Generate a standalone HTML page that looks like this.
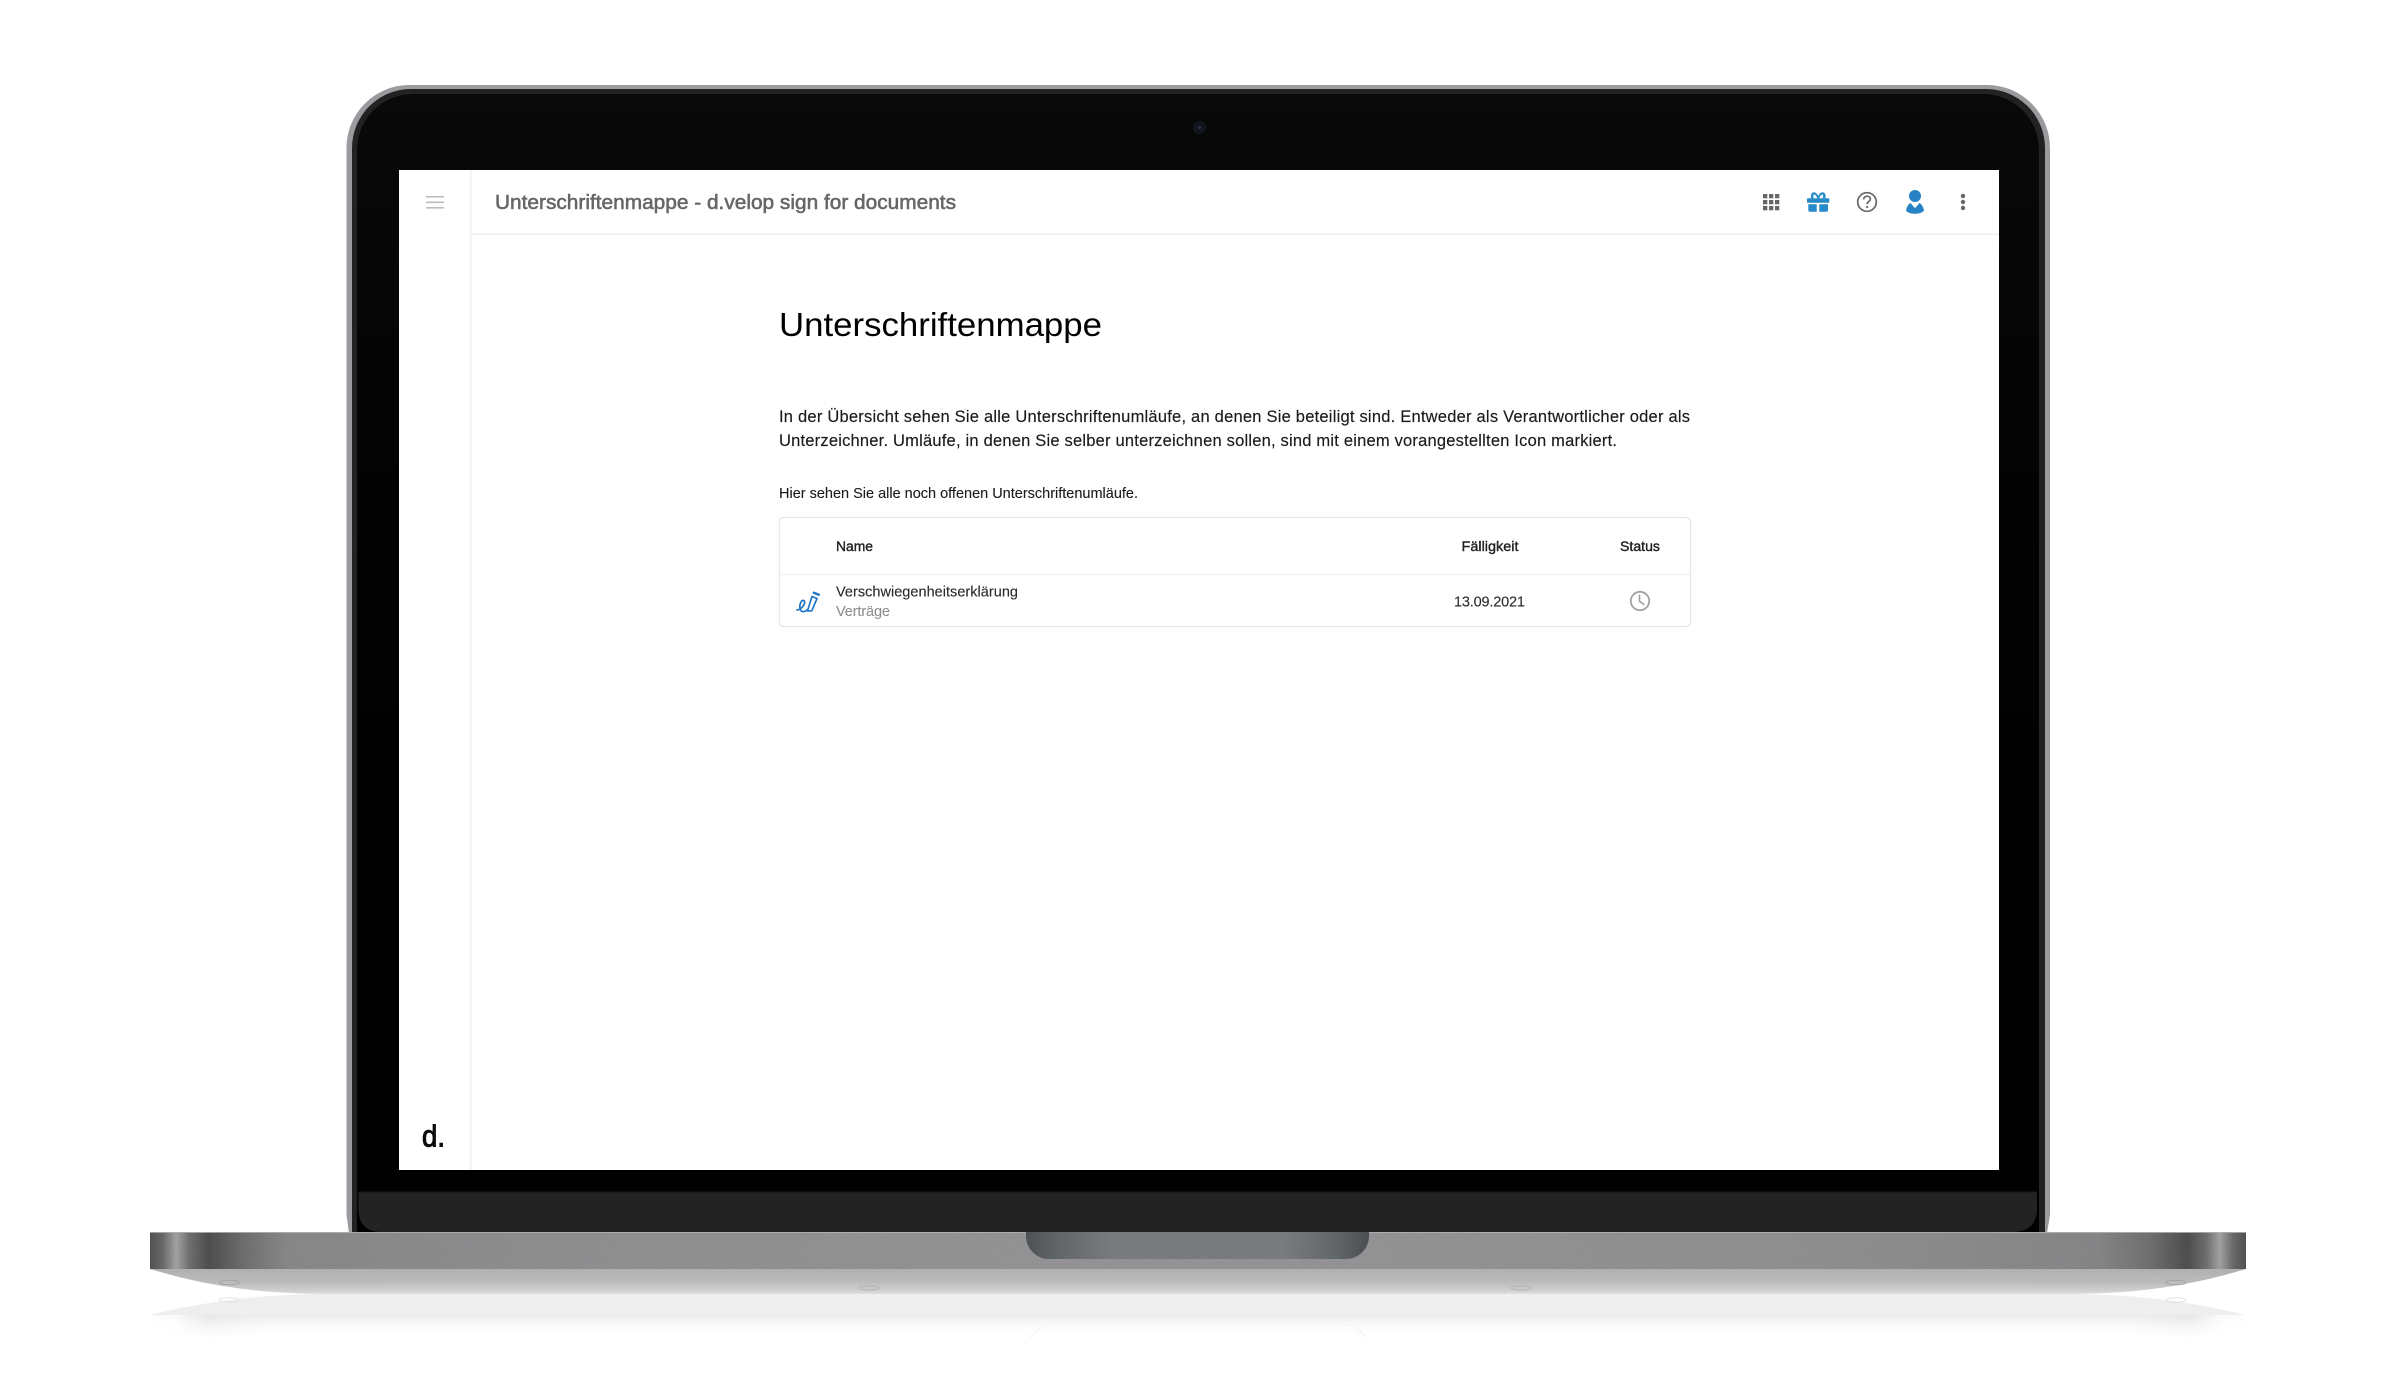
<!DOCTYPE html>
<html lang="de">
<head>
<meta charset="utf-8">
<title>Unterschriftenmappe</title>
<style>
html,body{margin:0;padding:0;background:#fff;width:2395px;height:1377px;overflow:hidden}
svg{display:block}
text{font-family:"Liberation Sans",sans-serif}
</style>
</head>
<body>
<svg width="2395" height="1377" viewBox="0 0 2395 1377" xmlns="http://www.w3.org/2000/svg">
<defs>
  <linearGradient id="baseH" x1="150" x2="2246" y1="0" y2="0" gradientUnits="userSpaceOnUse">
    <stop offset="0" stop-color="#4c4c4e"/>
    <stop offset=".006" stop-color="#646466"/>
    <stop offset=".0125" stop-color="#a0a0a2"/>
    <stop offset=".019" stop-color="#6a6a6c"/>
    <stop offset=".028" stop-color="#48484a"/>
    <stop offset=".045" stop-color="#6a6a6c"/>
    <stop offset=".065" stop-color="#848486"/>
    <stop offset=".2" stop-color="#8c8c8e"/>
    <stop offset=".5" stop-color="#929294"/>
    <stop offset=".8" stop-color="#8c8c8e"/>
    <stop offset=".93" stop-color="#828284"/>
    <stop offset=".955" stop-color="#6a6a6c"/>
    <stop offset=".972" stop-color="#48484a"/>
    <stop offset=".981" stop-color="#6a6a6c"/>
    <stop offset=".9875" stop-color="#a0a0a2"/>
    <stop offset=".994" stop-color="#646466"/>
    <stop offset="1" stop-color="#4c4c4e"/>
  </linearGradient>
  <linearGradient id="baseLow" x1="0" x2="0" y1="0" y2="1">
    <stop offset="0" stop-color="#b0b0b0"/>
    <stop offset=".5" stop-color="#bbbbbc"/>
    <stop offset=".88" stop-color="#d2d2d5"/>
    <stop offset="1" stop-color="#e2e2e5"/>
  </linearGradient>
  <linearGradient id="notchH" x1="1026" x2="1369" y1="0" y2="0" gradientUnits="userSpaceOnUse">
    <stop offset="0" stop-color="#474c50"/>
    <stop offset=".09" stop-color="#5c6165"/>
    <stop offset=".25" stop-color="#75797c"/>
    <stop offset=".75" stop-color="#75797c"/>
    <stop offset=".91" stop-color="#5c6165"/>
    <stop offset="1" stop-color="#44494d"/>
  </linearGradient>
  <linearGradient id="bezelV" x1="0" x2="0" y1="0" y2="1">
    <stop offset="0" stop-color="#090909"/>
    <stop offset=".35" stop-color="#030303"/>
    <stop offset=".7" stop-color="#000"/>
    <stop offset="1" stop-color="#000"/>
  </linearGradient>
  <linearGradient id="reflFade" x1="0" x2="0" y1="0" y2="1">
    <stop offset="0" stop-color="#ececec"/>
    <stop offset=".5" stop-color="#f7f7f7"/>
    <stop offset="1" stop-color="#ffffff"/>
  </linearGradient>
  <linearGradient id="reflH" x1="150" x2="2246" y1="0" y2="0" gradientUnits="userSpaceOnUse">
    <stop offset="0" stop-color="#fff" stop-opacity=".95"/>
    <stop offset=".012" stop-color="#fff" stop-opacity=".7"/>
    <stop offset=".028" stop-color="#e2e2e2" stop-opacity=".6"/>
    <stop offset=".06" stop-color="#e9e9e9" stop-opacity="0"/>
    <stop offset=".94" stop-color="#e9e9e9" stop-opacity="0"/>
    <stop offset=".972" stop-color="#e2e2e2" stop-opacity=".6"/>
    <stop offset=".988" stop-color="#fff" stop-opacity=".7"/>
    <stop offset="1" stop-color="#fff" stop-opacity=".95"/>
  </linearGradient>
  <linearGradient id="reflDown" x1="0" x2="0" y1="0" y2="1">
    <stop offset="0" stop-color="#fff" stop-opacity="0"/>
    <stop offset="1" stop-color="#fff" stop-opacity="1"/>
  </linearGradient>
  <filter id="noise" x="0" y="0" width="100%" height="100%">
    <feTurbulence type="fractalNoise" baseFrequency=".9" numOctaves="2" seed="4"/>
    <feColorMatrix type="matrix" values="0 0 0 0 .5  0 0 0 0 .5  0 0 0 0 .5  0 0 0 1.1 -.35"/>
  </filter>
  <filter id="soft" x="-2%" y="-2%" width="104%" height="104%"><feGaussianBlur stdDeviation=".35"/></filter>
  <clipPath id="baseClip"><path d="M150 1232H2246V1269C2196 1284 2146 1293 2076 1294H320C250 1293 200 1284 150 1269Z"/></clipPath>
</defs>

<!-- reflection -->
<path d="M150 1315C200 1303 250 1295 320 1294H2076C2146 1295 2196 1303 2246 1315Z" fill="#eeeeee"/>
<rect x="150" y="1315" width="2096" height="24" fill="url(#reflFade)"/>
<rect x="150" y="1315" width="2096" height="24" fill="url(#reflH)"/>
<rect x="150" y="1315" width="2096" height="24" fill="url(#reflDown)"/>
<ellipse cx="229" cy="1300" rx="10" ry="2.200" fill="none" stroke="#e0e0e0" stroke-width="1"/>
<ellipse cx="2176" cy="1300" rx="10" ry="2.200" fill="none" stroke="#e0e0e0" stroke-width="1"/>
<path d="M1030 1338Q1040 1324 1056 1324H1340Q1356 1324 1366 1338" fill="none" stroke="#f6f6f6" stroke-width="1.500"/>

<!-- lid shell -->
<path d="M349 1233L346.500 1215V148A63 63 0 0 1 409 85H1987A63 63 0 0 1 2050 148V1215L2047 1233Z" fill="#9b9b9f"/>
<path d="M352 1233V148A59 59 0 0 1 411 89H1985A59 59 0 0 1 2045 148V1233Z" fill="#222223"/>
<path d="M357 1233V150A56 56 0 0 1 413 94H1983A56 56 0 0 1 2039 150V1233Z" fill="url(#bezelV)"/>
<path d="M358.500 1192H2037V1210Q2036 1232 2012 1232H382Q359 1232 358.500 1210Z" fill="#232323"/>
<rect x="358" y="1191.500" width="1679" height="1" fill="#171717"/>

<!-- camera -->
<circle cx="1199.500" cy="127.500" r="6.500" fill="#12161f"/>
<circle cx="1199.500" cy="127.500" r="1.500" fill="#2c3242"/>

<!-- base -->
<path d="M150 1269H2246C2196 1284 2146 1293 2076 1294H320C250 1293 200 1284 150 1269Z" fill="url(#baseLow)"/>
<rect x="150" y="1232" width="2096" height="37" fill="url(#baseH)"/>
<rect x="150" y="1232" width="2096" height="1" fill="#b4b4b6" opacity=".8"/>
<path d="M1026 1232H1369V1236A23 23 0 0 1 1346 1259H1049A23 23 0 0 1 1026 1236Z" fill="url(#notchH)"/>
<rect x="150" y="1232" width="2096" height="62" filter="url(#noise)" opacity=".25" clip-path="url(#baseClip)"/>
<ellipse cx="229.500" cy="1282.500" rx="10" ry="2.300" fill="none" stroke="#a4a4a6" stroke-width="1"/>
<ellipse cx="2176" cy="1282.500" rx="10" ry="2.300" fill="none" stroke="#a4a4a6" stroke-width="1"/>
<ellipse cx="869" cy="1288" rx="10" ry="2" fill="none" stroke="#b4b4b6" stroke-width="1"/>
<ellipse cx="1521" cy="1288" rx="10" ry="2" fill="none" stroke="#b4b4b6" stroke-width="1"/>

<!-- screen -->
<rect x="399" y="170" width="1600" height="1000" fill="#fff"/>
<g filter="url(#soft)">
  <rect x="470" y="170" width="1.500" height="1000" fill="#efefef"/>
  <rect x="471" y="233.500" width="1528" height="1.500" fill="#ececec"/>

  <!-- hamburger -->
  <g fill="#bdbdbd">
    <rect x="426" y="196" width="18" height="1.600"/>
    <rect x="426" y="201.500" width="18" height="1.600"/>
    <rect x="426" y="207" width="18" height="1.600"/>
  </g>

  <text x="495" y="209" font-size="20" fill="#666" textLength="461" lengthAdjust="spacingAndGlyphs" stroke="#666" stroke-width=".55">Unterschriftenmappe - d.velop sign for documents</text>

  <!-- grid icon -->
  <g fill="#666">
    <rect x="1763" y="194" width="4.300" height="4.300"/><rect x="1769" y="194" width="4.300" height="4.300"/><rect x="1775" y="194" width="4.300" height="4.300"/>
    <rect x="1763" y="200" width="4.300" height="4.300"/><rect x="1769" y="200" width="4.300" height="4.300"/><rect x="1775" y="200" width="4.300" height="4.300"/>
    <rect x="1763" y="206" width="4.300" height="4.300"/><rect x="1769" y="206" width="4.300" height="4.300"/><rect x="1775" y="206" width="4.300" height="4.300"/>
  </g>

  <!-- gift icon -->
  <g fill="#2789c9">
    <rect x="1807" y="198.300" width="22.300" height="4.500" rx=".8"/>
    <path d="M1808.300 204.300H1816.700V211.700H1810A1.700 1.700 0 0 1 1808.300 210Z"/>
    <path d="M1819.300 204.300H1828V210A1.700 1.700 0 0 1 1826.300 211.700H1819.300Z"/>
    <path d="M1811 198.300C1810.500 195 1811.500 192.300 1814 192.300C1816 192.300 1817.500 194.300 1818.200 196.300C1818.900 194.300 1820.500 192.300 1822.500 192.300C1825 192.300 1826 195 1825.500 198.300H1822.800C1823.500 196 1823.200 194.500 1822.300 194.500C1821 194.500 1819.800 196.500 1819.300 198.300H1817.200C1816.700 196.500 1815.500 194.500 1814.200 194.500C1813.300 194.500 1813 196 1813.700 198.300Z"/>
  </g>

  <!-- help icon -->
  <circle cx="1867" cy="202" r="9.300" fill="none" stroke="#666" stroke-width="1.700"/>
  <path d="M1863.700 199.300C1863.800 197.300 1865.200 196.200 1867.100 196.200C1869 196.200 1870.400 197.400 1870.400 199.100C1870.400 201.300 1867.100 201.600 1867.100 204.300" fill="none" stroke="#666" stroke-width="1.700"/>
  <circle cx="1867.100" cy="207" r="1.100" fill="#666"/>

  <!-- user icon -->
  <g fill="#2582c4">
    <circle cx="1915" cy="196" r="6"/>
    <path d="M1910.500 203L1915 208.200L1919.500 203C1921.800 204.200 1923.600 207.500 1924 210.700C1921.800 212.800 1918.500 213.800 1915 213.800C1911.500 213.800 1908.200 212.800 1906 210.700C1906.400 207.500 1908.200 204.200 1910.500 203Z"/>
  </g>

  <!-- kebab icon -->
  <g fill="#666">
    <circle cx="1963" cy="196" r="2.200"/><circle cx="1963" cy="202" r="2.200"/><circle cx="1963" cy="208" r="2.200"/>
  </g>

  <!-- logo -->
  <text x="422" y="1146.500" font-size="31" fill="#0c0c0c" textLength="23" lengthAdjust="spacingAndGlyphs" stroke="#0c0c0c" stroke-width="1">d.</text>

  <!-- content -->
  <text x="779" y="336" font-size="33" fill="#000" textLength="323" lengthAdjust="spacingAndGlyphs">Unterschriftenmappe</text>
  <text x="779" y="422" font-size="16.500" fill="#1a1a1a" textLength="911" lengthAdjust="spacing" stroke="#1a1a1a" stroke-width=".15">In der Übersicht sehen Sie alle Unterschriftenumläufe, an denen Sie beteiligt sind. Entweder als Verantwortlicher oder als</text>
  <text x="779" y="446" font-size="16.500" fill="#1a1a1a" textLength="838" lengthAdjust="spacing" stroke="#1a1a1a" stroke-width=".15">Unterzeichner. Umläufe, in denen Sie selber unterzeichnen sollen, sind mit einem vorangestellten Icon markiert.</text>
  <text x="779" y="498" font-size="14.500" fill="#1a1a1a" textLength="359" lengthAdjust="spacing" stroke="#1a1a1a" stroke-width=".1">Hier sehen Sie alle noch offenen Unterschriftenumläufe.</text>

  <!-- table -->
  <rect x="779.500" y="517.500" width="911" height="109" rx="4" fill="#fff" stroke="#e6e6e6" stroke-width="1.300"/>
  <rect x="780" y="574" width="910" height="1" fill="#eeeeee"/>
  <text x="836" y="551" font-size="14" fill="#222" textLength="37" lengthAdjust="spacingAndGlyphs" stroke="#222" stroke-width=".4">Name</text>
  <text x="1461.500" y="551" font-size="14" fill="#222" textLength="57" lengthAdjust="spacingAndGlyphs" stroke="#222" stroke-width=".4">Fälligkeit</text>
  <text x="1620" y="551" font-size="14" fill="#222" textLength="40" lengthAdjust="spacingAndGlyphs" stroke="#222" stroke-width=".4">Status</text>
  <text x="836" y="596.500" font-size="14.500" fill="#2a2a2a" textLength="182" lengthAdjust="spacing" stroke="#2a2a2a" stroke-width=".12">Verschwiegenheitserklärung</text>
  <text x="836" y="616" font-size="14.500" fill="#8f8f8f" textLength="54" lengthAdjust="spacing" stroke="#8f8f8f" stroke-width=".1">Verträge</text>
  <text x="1454" y="606.500" font-size="14.500" fill="#2a2a2a" textLength="71" lengthAdjust="spacing" stroke="#2a2a2a" stroke-width=".12">13.09.2021</text>

  <!-- pen icon -->
  <g fill="none" stroke="#2178c8" stroke-width="1.700" stroke-linecap="round" stroke-linejoin="round">
    <path d="M797 610C800.500 609.800 804 606 804.500 603C805 600 802.500 599.500 801 602C799.300 605 799.200 610.800 802.300 611.500C804.500 612 806.500 610.800 808 609"/>
    <path d="M807.500 611L812 596.500L817 598.500L811.800 610.800Z"/>
    <path d="M813.800 592.800L818.800 594.800" stroke-width="2.400"/>
  </g>

  <!-- clock icon -->
  <circle cx="1640" cy="601" r="9.200" fill="none" stroke="#a0a0a0" stroke-width="1.800"/>
  <path d="M1639.500 594.500V601.200L1644.300 604.800" fill="none" stroke="#a0a0a0" stroke-width="1.600"/>
</g>
</svg>
</body>
</html>
